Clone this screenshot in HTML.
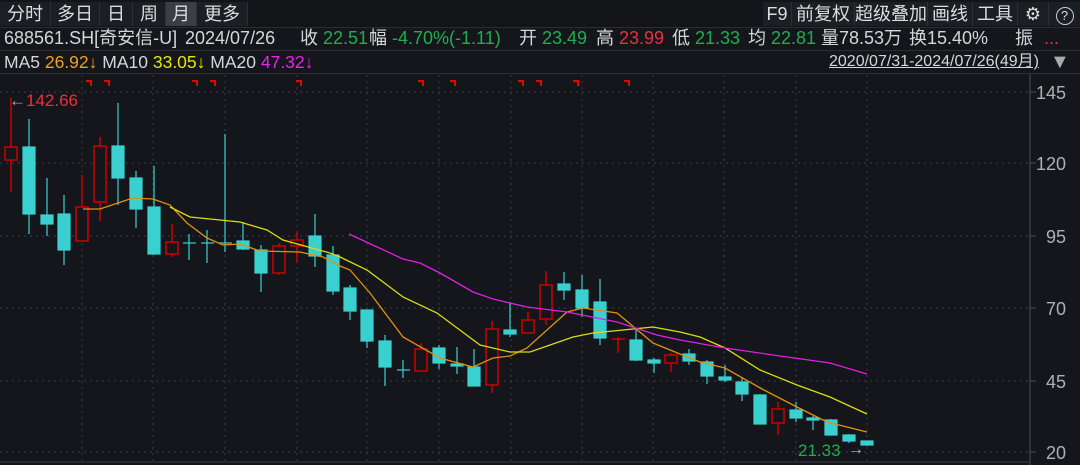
<!DOCTYPE html><html><head><meta charset="utf-8"><style>
body{margin:0;width:1080px;height:465px;background:#14161b;overflow:hidden;font-family:"Liberation Sans","Noto Sans CJK SC",sans-serif;color:#d6d6d6}
.r1{position:absolute;top:0;left:0;width:1080px;height:27px;background:#121418;border-bottom:1px solid #2a2d33}
.tab{position:absolute;top:2px;height:24px;line-height:24px;font-size:18px;color:#ddd;background:#1b1e23;text-align:center;border-right:1px solid #2c2f35}
.r2{position:absolute;top:27px;left:0;width:1080px;height:23px;line-height:23px;font-size:18px;border-bottom:1px solid #2a2d33;white-space:nowrap}
.r3{position:absolute;top:51px;left:0;width:1080px;height:22px;line-height:22px;font-size:17.5px;border-bottom:1px solid #2a2d33;white-space:nowrap}
.g{color:#1fae4f}.rd{color:#e8323a}
span{display:inline-block}
b{font-weight:normal}
</style></head><body>
<div class="r1">
<div class="tab" style="left:0;width:50px">分时</div>
<div class="tab" style="left:51px;width:48px">多日</div>
<div class="tab" style="left:100px;width:32px">日</div>
<div class="tab" style="left:133px;width:32px">周</div>
<div class="tab" style="left:166px;width:30px;background:#3b3e45">月</div>
<div class="tab" style="left:197px;width:50px">更多</div>
<div class="tab" style="left:763px;width:28px">F9</div>
<div class="tab" style="left:792px;width:62px">前复权</div>
<div class="tab" style="left:855px;width:72px">超级叠加</div>
<div class="tab" style="left:928px;width:44px">画线</div>
<div class="tab" style="left:973px;width:44px">工具</div>
<div class="tab" style="left:1018px;width:30px">⚙</div>
<div class="tab" style="left:1049px;width:31px"><span style="width:16px;height:16px;border:1.5px solid #ccc;border-radius:50%;line-height:16px;font-size:13px;margin-top:3px">?</span></div>
</div>
<div class="r2"><span style="position:absolute;left:4px">688561.SH[奇安信-U]</span>
<span style="position:absolute;left:185px">2024/07/26</span>
<span style="position:absolute;left:300px">收 <b class="g">22.51</b></span>
<span style="position:absolute;left:369px">幅 <b class="g">-4.70%(-1.11)</b></span>
<span style="position:absolute;left:519px">开 <b class="g">23.49</b></span>
<span style="position:absolute;left:596px">高 <b class="rd">23.99</b></span>
<span style="position:absolute;left:672px">低 <b class="g">21.33</b></span>
<span style="position:absolute;left:748px">均 <b class="g">22.81</b></span>
<span style="position:absolute;left:821px">量78.53万</span>
<span style="position:absolute;left:909px">换15.40%</span>
<span style="position:absolute;left:1015px">振</span>
<span style="position:absolute;left:1044px" class="rd">...</span></div>
<div class="r3"><span style="position:absolute;left:4px">MA5 <b style="color:#f0a020">26.92↓</b> MA10 <b style="color:#e6e600">33.05↓</b> MA20 <b style="color:#f020f0">47.32↓</b></span>
<span style="position:absolute;left:829px;text-decoration:underline;font-size:16px">2020/07/31-2024/07/26(49月)</span><span style="position:absolute;left:1050px;color:#aaa;font-size:20px">▼</span></div>
<svg width="1080" height="465" style="position:absolute;left:0;top:0">
<g stroke="#3a3d44" stroke-dasharray="2,4" stroke-width="1">
<line x1="0" y1="92" x2="1030" y2="92"/><line x1="0" y1="163" x2="1030" y2="163"/><line x1="0" y1="236" x2="1030" y2="236"/><line x1="0" y1="308" x2="1030" y2="308"/><line x1="0" y1="381" x2="1030" y2="381"/><line x1="0" y1="452" x2="1030" y2="452"/>
<line x1="82" y1="75" x2="82" y2="462"/><line x1="153" y1="75" x2="153" y2="462"/><line x1="225" y1="75" x2="225" y2="462"/><line x1="297" y1="75" x2="297" y2="462"/><line x1="367" y1="75" x2="367" y2="462"/><line x1="439" y1="75" x2="439" y2="462"/><line x1="511" y1="75" x2="511" y2="462"/><line x1="582" y1="75" x2="582" y2="462"/><line x1="653" y1="75" x2="653" y2="462"/><line x1="724" y1="75" x2="724" y2="462"/><line x1="796" y1="75" x2="796" y2="462"/><line x1="867" y1="75" x2="867" y2="462"/>
</g>
<line x1="1030" y1="74" x2="1030" y2="465" stroke="#4a4d54"/>
<line x1="0" y1="462" x2="1030" y2="462" stroke="#3a3d44"/>
<g stroke="#4a4d54"><line x1="1030" y1="92" x2="1036" y2="92"/><line x1="1030" y1="163" x2="1036" y2="163"/><line x1="1030" y1="236" x2="1036" y2="236"/><line x1="1030" y1="308" x2="1036" y2="308"/><line x1="1030" y1="381" x2="1036" y2="381"/><line x1="1030" y1="452" x2="1036" y2="452"/></g>
<g fill="#b0b0b0" font-size="18" font-family="Liberation Sans,sans-serif"><text x="1036" y="99">145</text><text x="1036" y="170">120</text><text x="1046" y="243">95</text><text x="1046" y="315">70</text><text x="1046" y="388">45</text><text x="1046" y="459">20</text></g>
<g fill="none" stroke="#e00" stroke-width="2">
<path d="M86 81h5v5M104 81h5v5M192 81h5v5M210 81h5v5M296 81h5v5M418 81h5v5M450 81h5v5M518 81h5v5M536 81h5v5M573 81h5v5M624 81h5v5"/></g>
<text x="9" y="106" fill="#e8323a" font-size="17" font-family="Liberation Sans,sans-serif"><tspan fill="#aaa">←</tspan>142.66</text>
<text x="798" y="456" fill="#1fae4f" font-size="17" font-family="Liberation Sans,sans-serif">21.33</text>
<text x="848" y="454" fill="#bbb" font-size="16">→</text>
<g stroke="#3bd0d0" fill="#3bd0d0" stroke-width="1.2">
<line x1="29" y1="119" x2="29" y2="234"/><rect x="23" y="147" width="12" height="67"/>
<line x1="47" y1="178" x2="47" y2="236"/><rect x="41" y="215" width="12" height="9"/>
<line x1="64" y1="195" x2="64" y2="265"/><rect x="58" y="214" width="12" height="36"/>
<line x1="118" y1="103" x2="118" y2="205"/><rect x="112" y="146" width="12" height="32"/>
<line x1="136" y1="171" x2="136" y2="228"/><rect x="130" y="178" width="12" height="31"/>
<line x1="154" y1="166" x2="154" y2="255"/><rect x="148" y="207" width="12" height="47"/>
<line x1="189" y1="234" x2="189" y2="260"/><line x1="183" y1="243" x2="196" y2="243"/>
<line x1="207" y1="230" x2="207" y2="263"/><line x1="201" y1="243" x2="214" y2="243"/>
<line x1="225" y1="134" x2="225" y2="252"/><line x1="219" y1="243" x2="232" y2="243"/>
<line x1="243" y1="222" x2="243" y2="250"/><rect x="237" y="241" width="12" height="8"/>
<line x1="261" y1="245" x2="261" y2="292"/><rect x="255" y="250" width="12" height="23"/>
<line x1="315" y1="214" x2="315" y2="267"/><rect x="309" y="236" width="12" height="20"/>
<line x1="333" y1="246" x2="333" y2="295"/><rect x="327" y="255" width="12" height="36"/>
<line x1="350" y1="285" x2="350" y2="320"/><rect x="344" y="288" width="12" height="23"/>
<line x1="367" y1="310" x2="367" y2="348"/><rect x="361" y="310" width="12" height="31"/>
<line x1="385" y1="335" x2="385" y2="386"/><rect x="379" y="341" width="12" height="26"/>
<line x1="403" y1="360" x2="403" y2="378"/><line x1="397" y1="370" x2="410" y2="370"/>
<line x1="439" y1="345" x2="439" y2="369"/><rect x="433" y="348" width="12" height="15"/>
<line x1="457" y1="347" x2="457" y2="374"/><rect x="451" y="364" width="12" height="2"/>
<line x1="474" y1="349" x2="474" y2="386"/><rect x="468" y="367" width="12" height="19"/>
<line x1="510" y1="302" x2="510" y2="337"/><rect x="504" y="330" width="12" height="4"/>
<line x1="564" y1="272" x2="564" y2="300"/><rect x="558" y="284" width="12" height="6"/>
<line x1="582" y1="275" x2="582" y2="317"/><rect x="576" y="290" width="12" height="18"/>
<line x1="600" y1="279" x2="600" y2="345"/><rect x="594" y="302" width="12" height="36"/>
<line x1="636" y1="330" x2="636" y2="361"/><rect x="630" y="340" width="12" height="20"/>
<line x1="654" y1="358" x2="654" y2="373"/><rect x="648" y="360" width="12" height="3"/>
<line x1="689" y1="349" x2="689" y2="365"/><rect x="683" y="354" width="12" height="7"/>
<line x1="707" y1="360" x2="707" y2="384"/><rect x="701" y="362" width="12" height="14"/>
<line x1="725" y1="365" x2="725" y2="382"/><rect x="719" y="377" width="12" height="3"/>
<line x1="742" y1="377" x2="742" y2="401"/><rect x="736" y="382" width="12" height="12"/>
<line x1="760" y1="394" x2="760" y2="424"/><rect x="754" y="395" width="12" height="29"/>
<line x1="796" y1="402" x2="796" y2="422"/><rect x="790" y="410" width="12" height="8"/>
<line x1="813" y1="416" x2="813" y2="430"/><rect x="807" y="418" width="12" height="2"/>
<line x1="831" y1="419" x2="831" y2="435"/><rect x="825" y="420" width="12" height="15"/>
<line x1="849" y1="434" x2="849" y2="443"/><rect x="843" y="435" width="12" height="6"/>
<line x1="867" y1="441" x2="867" y2="446"/><rect x="861" y="441" width="12" height="4"/>
</g>
<g stroke="#c00" fill="#14161b" stroke-width="1.5">
<line x1="11" y1="98" x2="11" y2="192"/><rect x="5" y="147" width="12" height="13"/>
<line x1="82" y1="175" x2="82" y2="241"/><rect x="76" y="207" width="12" height="34"/>
<line x1="100" y1="137" x2="100" y2="221"/><rect x="94" y="146" width="12" height="56"/>
<line x1="172" y1="224" x2="172" y2="257"/><rect x="166" y="242" width="12" height="12"/>
<line x1="279" y1="243" x2="279" y2="275"/><rect x="273" y="246" width="12" height="27"/>
<line x1="297" y1="232" x2="297" y2="263"/><rect x="291" y="240" width="12" height="6"/>
<line x1="421" y1="343" x2="421" y2="371"/><rect x="415" y="349" width="12" height="22"/>
<line x1="492" y1="321" x2="492" y2="393"/><rect x="486" y="329" width="12" height="56"/>
<line x1="528" y1="312" x2="528" y2="333"/><rect x="522" y="320" width="12" height="13"/>
<line x1="546" y1="271" x2="546" y2="325"/><rect x="540" y="285" width="12" height="34"/>
<line x1="618" y1="337" x2="618" y2="353"/><line x1="612" y1="339" x2="625" y2="339"/>
<line x1="671" y1="353" x2="671" y2="372"/><rect x="665" y="355" width="12" height="8"/>
<line x1="778" y1="402" x2="778" y2="435"/><rect x="772" y="409" width="12" height="14"/>
</g>
<g fill="none" stroke-width="1.3">
<polyline stroke="#e09010" points="83,209 100,209 118,203 133,198 153,199 170,205 187,223 207,238 223,245 240,244 260,251 300,252 323,257 340,266 350,270 370,293 403,337 440,358 473,367 493,358 510,356 527,348 567,312 583,308 617,313 653,343 680,354 700,362 725,368 762,389 795,406 827,422 867,432"/>
<polyline stroke="#dcdc10" points="170,207 190,217 240,222 267,230 283,240 330,253 340,257 367,270 403,297 437,313 480,345 510,352 530,352 573,337 593,333 633,329 653,327 680,332 700,337 725,348 760,370 797,385 830,397 867,414"/>
<polyline stroke="#e020e0" points="349,234 403,259 420,263 440,273 473,292 493,299 527,307 567,312 617,322 657,335 680,340 725,348 780,356 830,363 867,374"/>
</g>
</svg>
</body></html>
